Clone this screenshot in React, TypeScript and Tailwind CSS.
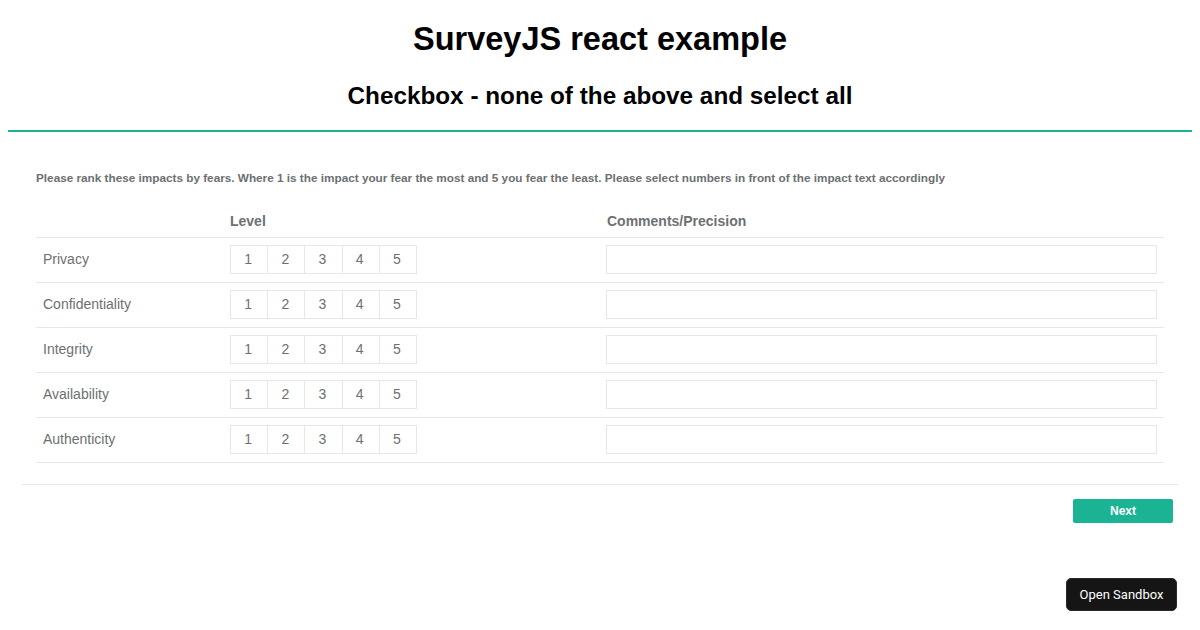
import { useState } from "react";

const rows = ["Privacy", "Confidentiality", "Integrity", "Availability", "Authenticity"];
const levels = [1, 2, 3, 4, 5];

function LevelGroup() {
  const [picked, setPicked] = useState<number | null>(null);
  return (
    <div className="flex w-[187px] h-[29px] border border-[#e7e7e7]">
      {levels.map((n, i) => (
        <button
          key={n}
          onClick={() => setPicked(n)}
          className={`flex-1 flex items-center justify-center pr-[2px] text-[14px] ${i > 0 ? "border-l border-[#e7e7e7]" : ""} ${picked === n ? "bg-[#1ab394] text-white" : "text-[#6d7072]"}`}
        >
          {n}
        </button>
      ))}
    </div>
  );
}

export default function App() {
  return (
    <div className="min-h-[630px] bg-white px-2 font-['Liberation_Sans',Arial,sans-serif]">
      <h1 className="pt-[21px] text-center text-[32.5px] leading-[37px] font-bold text-black">SurveyJS react example</h1>
      <h2 className="mt-[24px] text-center text-[24.3px] leading-[28px] font-bold text-black">
        Checkbox - none of the above and select all
      </h2>
      <div className="mt-[20px] border-t-2 border-[#1ab394]" />

      <div className="mx-[14px]">
        <div className="px-[14px]">
          <p className="mt-[39px] text-[11.75px] leading-[14px] font-bold text-[#6d7072]">
            Please rank these impacts by fears. Where 1 is the impact your fear the most and 5 you fear the least. Please select numbers in front of the impact text accordingly
          </p>

          <div className="mt-[20px]">
            <div className="grid grid-cols-[186px_376px_1fr] h-[33px] items-center border-b border-[#e7e7e7] text-[14px] font-bold text-[#6d7072]">
              <div />
              <div className="px-2">Level</div>
              <div className="pl-[9px]">Comments/Precision</div>
            </div>
            {rows.map((r) => (
              <div key={r} className="grid grid-cols-[186px_376px_1fr] h-[45px] items-center border-b border-[#e7e7e7]">
                <div className="px-[7px] text-[14px] text-[#6d7072] -mt-[2px]">{r}</div>
                <div className="px-2 pb-[2px]">
                  <LevelGroup />
                </div>
                <div className="pl-2 pr-[7px] pb-[2px]">
                  <input type="text" className="w-full h-[29px] border border-[#e7e7e7] px-2 text-[14px] outline-none" />
                </div>
              </div>
            ))}
          </div>
        </div>

        <div className="mt-[21px] border-t border-[#e7e7e7] flex justify-end pt-[14px] pr-[5px]">
          <button className="w-[100px] h-[24px] rounded-[2px] bg-[#1ab394] text-white text-[12px] font-bold">
            Next
          </button>
        </div>
      </div>

      <button className="fixed right-[23px] bottom-[19px] w-[111px] h-[33px] rounded-[5px] bg-[#151515] border border-[#2a2a2a] text-white text-[13px] font-['Roboto',Arial,sans-serif]">
        Open Sandbox
      </button>
    </div>
  );
}
